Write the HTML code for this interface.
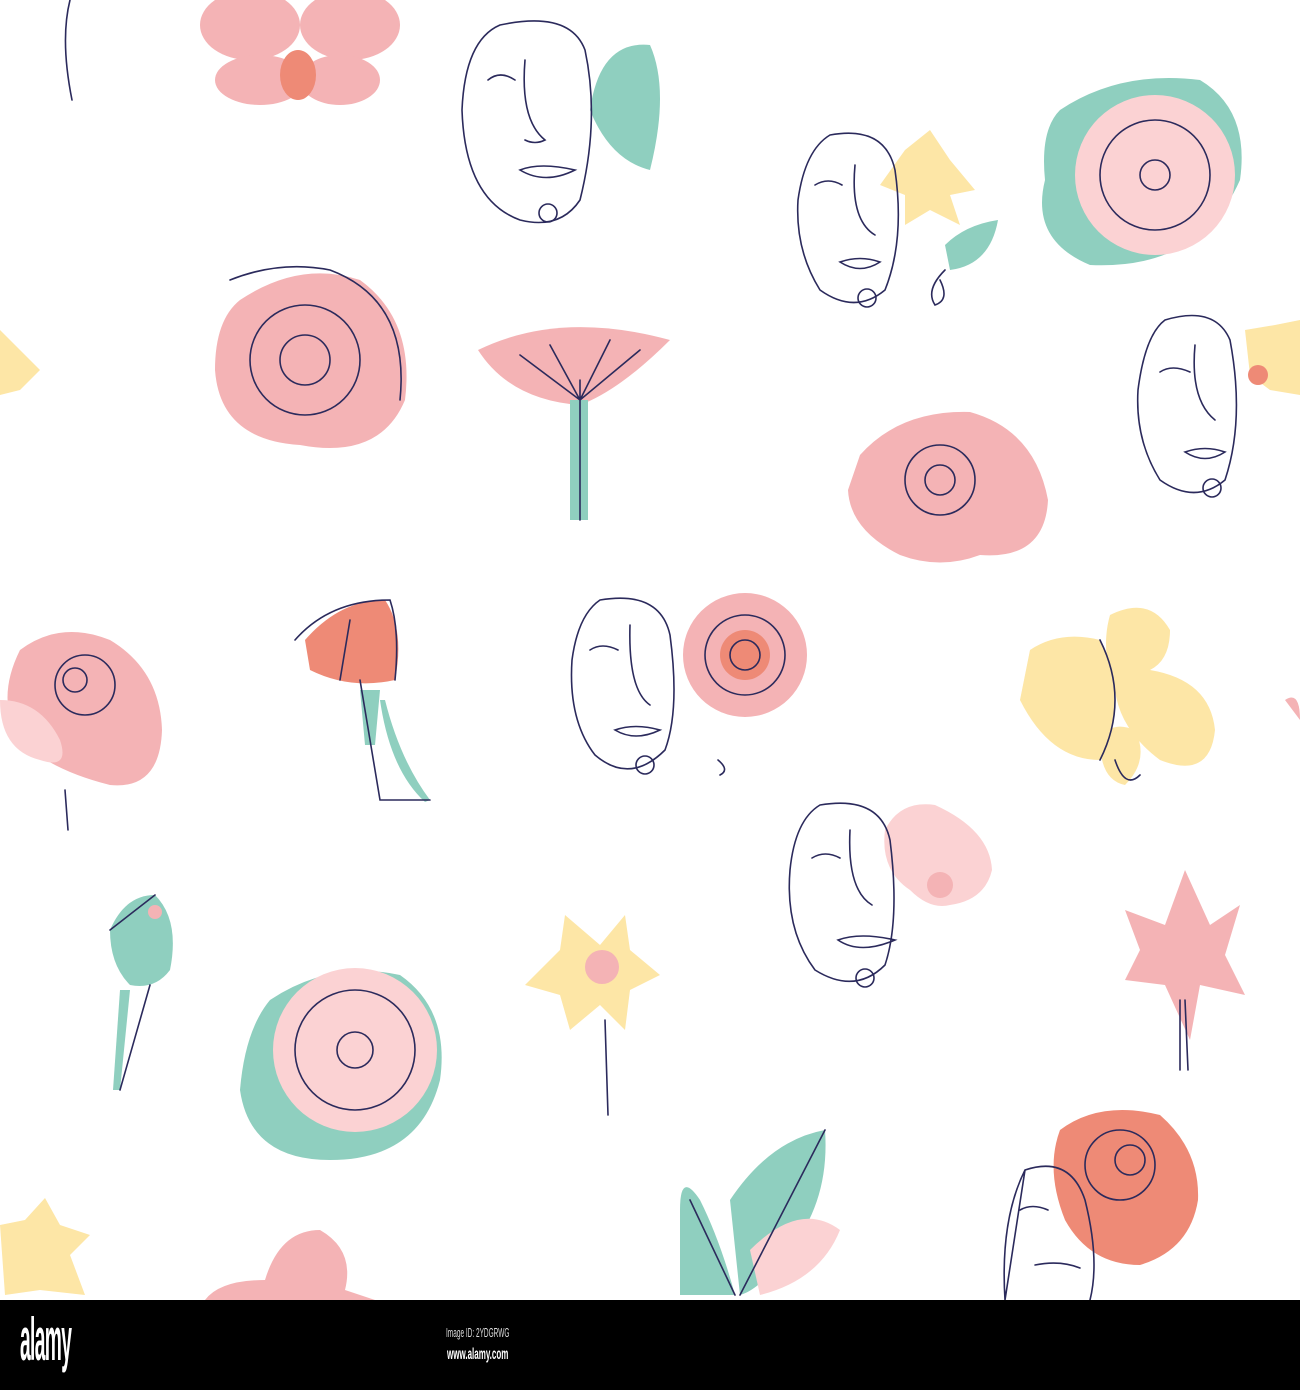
<!DOCTYPE html>
<html><head><meta charset="utf-8"><style>
html,body{margin:0;padding:0;background:#fff;width:1300px;height:1390px;overflow:hidden}
.bar{position:absolute;left:0;top:1300px;width:1300px;height:90px;background:#000}
.logo{position:absolute;left:20px;top:1305px;color:#fff;font:bold 60px "Liberation Sans Narrow","Liberation Sans",sans-serif;letter-spacing:-2px;transform:scaleX(0.32);transform-origin:left;line-height:70px}
.id{position:absolute;left:446px;top:1325px;color:#ddd;font:13px "Liberation Sans Narrow","Liberation Sans",sans-serif;transform:scaleX(.5);transform-origin:left;white-space:nowrap}
.url{position:absolute;left:447px;top:1346px;color:#fff;font:bold 16px "Liberation Sans Narrow","Liberation Sans",sans-serif;transform:scaleX(.5);transform-origin:left;white-space:nowrap}
svg{position:absolute;left:0;top:0}
</style></head><body>
<svg width="1300" height="1300" viewBox="0 0 1300 1300">
<g stroke="none">
<ellipse cx="250" cy="25" rx="50" ry="35" fill="#f4b3b5"/><ellipse cx="350" cy="25" rx="50" ry="35" fill="#f4b3b5"/>
<ellipse cx="260" cy="80" rx="45" ry="25" fill="#f4b3b5"/><ellipse cx="340" cy="80" rx="40" ry="25" fill="#f4b3b5"/>
<ellipse cx="298" cy="75" rx="18" ry="25" fill="#ee8a76"/>
<path d="M590 110 Q600 40 650 45 Q670 90 650 170 Q610 160 590 110Z" fill="#8fcfbf"/>
<path d="M880 185 L905 150 L930 130 L950 160 L975 190 L950 195 L960 225 L930 210 L905 225 L905 195Z" fill="#fde6a6"/>
<path d="M945 245 Q965 225 998 220 Q990 265 950 270Z" fill="#8fcfbf"/>
<path d="M1060 110 Q1120 70 1200 80 Q1250 110 1240 180 Q1200 270 1090 265 Q1030 240 1045 180 Q1040 130 1060 110Z" fill="#8fcfbf"/>
<circle cx="1155" cy="175" r="80" fill="#fbd2d3"/>
<path d="M240 300 Q300 260 360 280 Q415 320 405 400 Q380 460 300 445 Q220 440 215 370 Q215 320 240 300Z" fill="#f4b3b5"/>
<path d="M478 350 Q560 310 670 340 Q620 390 580 405 Q510 400 478 350Z" fill="#f4b3b5"/>
<rect x="570" y="400" width="18" height="120" fill="#8fcfbf"/>
<path d="M0 330 L20 350 L40 370 L20 390 L0 395Z" fill="#fde6a6"/>
<path d="M1245 330 L1275 325 L1300 320 L1300 395 L1270 390 L1250 375Z" fill="#fde6a6"/>
<circle cx="1258" cy="375" r="10" fill="#ee8a76"/>
<path d="M860 455 Q900 410 970 412 Q1035 430 1048 500 Q1045 560 980 555 Q940 570 900 555 Q850 530 848 490Z" fill="#f4b3b5"/>
<path d="M20 650 Q60 620 110 640 Q160 670 162 730 Q160 790 110 785 Q50 770 20 740 Q-5 700 20 650Z" fill="#f4b3b5"/>
<path d="M0 700 Q40 700 60 740 Q70 770 40 760 Q0 750 0 700Z" fill="#fbd2d3"/>
<path d="M305 640 Q340 600 385 600 Q405 630 395 680 Q350 690 310 670Z" fill="#ee8a76"/>
<path d="M360 690 L380 690 L375 745 L365 745Z M385 700 Q400 760 430 800 L425 802 Q390 770 380 700Z" fill="#8fcfbf"/>
<circle cx="745" cy="655" r="62" fill="#f4b3b5"/><circle cx="745" cy="655" r="25" fill="#ee8a76"/>
<path d="M1030 650 Q1060 630 1100 640 Q1130 700 1100 760 Q1050 760 1020 700Z" fill="#fde6a6"/>
<path d="M1110 615 Q1150 595 1170 630 Q1170 660 1150 670 Q1210 680 1215 730 Q1210 780 1160 760 Q1120 730 1115 690 Q1100 650 1110 615Z" fill="#fde6a6"/>
<path d="M1100 740 Q1110 720 1135 730 Q1150 760 1125 785 Q1100 780 1100 740Z" fill="#fde6a6"/>
<path d="M885 830 Q900 800 935 805 Q990 830 992 870 Q985 900 950 905 Q930 910 910 890 Q880 870 885 830Z" fill="#fbd2d3"/>
<circle cx="940" cy="885" r="13" fill="#f4b3b5"/>
<path d="M110 930 Q125 895 155 895 Q180 920 170 970 Q155 990 130 985 Q110 965 110 930Z" fill="#8fcfbf"/>
<path d="M120 990 L130 990 L120 1090 L113 1090Z" fill="#8fcfbf"/>
<circle cx="155" cy="912" r="7" fill="#f4b3b5"/>
<path d="M270 1000 Q330 960 400 975 Q450 1010 440 1080 Q420 1160 330 1160 Q250 1160 240 1090 Q245 1030 270 1000Z" fill="#8fcfbf"/>
<circle cx="355" cy="1050" r="82" fill="#fbd2d3"/>
<path d="M525 985 L560 950 L565 915 L600 945 L625 915 L630 950 L660 975 L630 990 L625 1030 L600 1005 L570 1030 L560 995Z" fill="#fde6a6"/>
<circle cx="602" cy="967" r="17" fill="#f4b3b5"/>
<path d="M1125 910 L1165 925 L1185 870 L1210 925 L1240 905 L1225 955 L1245 995 L1200 985 L1190 1040 L1165 985 L1125 980 L1140 950Z" fill="#f4b3b5"/>
<path d="M680 1210 Q680 1170 700 1200 Q720 1240 735 1295 L680 1295Z" fill="#8fcfbf"/>
<path d="M730 1200 Q770 1140 825 1130 Q830 1200 790 1250 Q760 1290 740 1295Z" fill="#8fcfbf"/>
<path d="M750 1250 Q800 1200 840 1230 Q820 1280 760 1295Z" fill="#fbd2d3"/>
<path d="M1060 1130 Q1100 1100 1160 1115 Q1200 1150 1198 1200 Q1190 1250 1140 1265 Q1090 1265 1065 1220 Q1045 1170 1060 1130Z" fill="#ee8a76"/>
<path d="M0 1225 L25 1220 L45 1198 L60 1225 L90 1235 L70 1255 L85 1295 L40 1290 L5 1295Z" fill="#fde6a6"/>
<path d="M265 1280 Q280 1230 320 1230 Q355 1250 345 1290 L375 1300 L205 1300 Q220 1280 265 1280Z" fill="#f4b3b5"/>
<path d="M1285 700 Q1300 690 1300 720Z" fill="#f4b3b5"/>
</g>
<g fill="none" stroke="#2b2a5c" stroke-width="1.6" stroke-linecap="round">
<path d="M500 25 Q570 10 585 50 Q600 120 580 200 Q560 230 520 220 Q465 200 462 110 Q465 40 500 25Z"/>
<path d="M488 80 Q500 70 515 80 M525 60 Q520 120 545 140 Q535 145 525 140 M520 170 Q540 162 575 170 Q545 185 520 170Z"/>
<circle cx="548" cy="213" r="9"/>
<path d="M830 135 Q885 125 895 170 Q905 240 885 290 Q855 315 820 290 Q795 250 798 200 Q805 150 830 135Z"/>
<path d="M815 185 Q828 177 842 185 M855 165 Q850 220 875 235 M840 262 Q860 255 880 262 Q860 275 840 262Z"/><circle cx="867" cy="298" r="9"/>
<path d="M1165 320 Q1215 305 1230 340 Q1245 420 1225 480 Q1195 505 1160 480 Q1135 440 1138 390 Q1145 335 1165 320Z"/>
<path d="M1160 372 Q1172 364 1190 372 M1195 345 Q1190 400 1215 420 M1185 452 Q1205 445 1225 452 Q1205 465 1185 452Z"/><circle cx="1212" cy="488" r="9"/>
<path d="M600 600 Q660 590 670 635 Q680 710 665 750 Q630 785 595 755 Q568 720 572 660 Q578 615 600 600Z"/>
<path d="M590 650 Q602 642 618 650 M630 625 Q628 690 650 705 M615 730 Q635 723 660 730 Q635 742 615 730Z"/><circle cx="645" cy="765" r="9"/>
<path d="M820 805 Q880 795 890 840 Q900 920 885 965 Q855 995 815 970 Q785 930 790 870 Q795 820 820 805Z"/>
<path d="M812 858 Q825 850 840 858 M850 830 Q847 890 872 905 M838 940 Q860 932 895 940 Q860 955 838 940Z"/><circle cx="865" cy="978" r="9"/>
<path d="M1025 1170 Q1070 1155 1085 1200 Q1100 1260 1090 1300 M1005 1300 Q1000 1220 1025 1170Z"/>
<path d="M1020 1210 Q1032 1203 1048 1210 M1035 1265 Q1060 1260 1080 1268"/>
<circle cx="305" cy="360" r="55"/><circle cx="305" cy="360" r="25"/>
<path d="M230 280 Q280 260 330 270 Q410 300 400 400"/>
<circle cx="940" cy="480" r="35"/><circle cx="940" cy="480" r="15"/>
<circle cx="745" cy="655" r="40"/><circle cx="745" cy="655" r="15"/>
<circle cx="1155" cy="175" r="55"/><circle cx="1155" cy="175" r="15"/>
<circle cx="355" cy="1050" r="60"/><circle cx="355" cy="1050" r="18"/>
<circle cx="1120" cy="1165" r="35"/><circle cx="1130" cy="1160" r="15"/>
<circle cx="85" cy="685" r="30"/><circle cx="75" cy="680" r="12"/>
<path d="M580 380 L580 520 M520 355 L580 400 L640 350 M550 345 L580 400 L610 340"/>
<path d="M295 640 Q330 600 390 600 Q400 630 395 680 M350 620 L340 680 M360 680 L380 800 L430 800"/>
<path d="M70 0 Q60 40 72 100 M605 1020 L608 1115 M1180 1000 L1180 1070 M1185 1000 L1188 1070 M65 790 L68 830"/>
<path d="M940 280 Q950 300 935 305 Q925 290 945 270 M718 760 Q730 770 720 775"/>
<path d="M110 930 L155 895 M150 985 L120 1090"/>
<path d="M690 1200 L735 1295 M825 1130 L740 1295"/>
<path d="M1100 640 Q1130 700 1100 760 M1115 760 Q1125 790 1140 775"/>
</g>
</svg>
<div class="bar"></div>
<div class="logo">alamy</div>
<div class="id">Image ID: 2YDGRWG</div>
<div class="url">www.alamy.com</div>
</body></html>
